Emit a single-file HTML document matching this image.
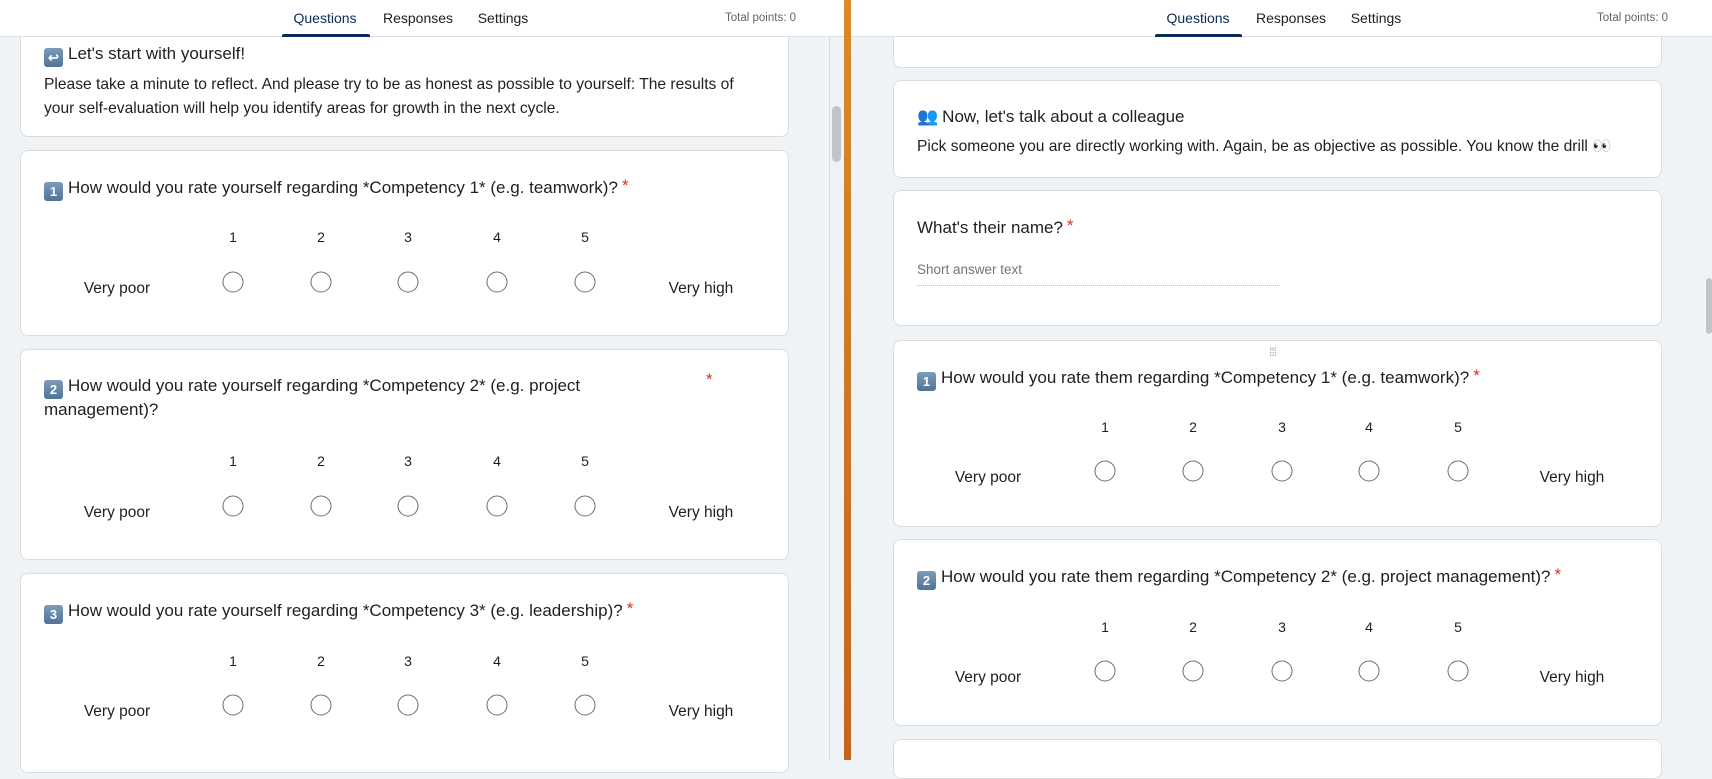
<!DOCTYPE html>
<html><head><meta charset="utf-8"><style>
*{margin:0;padding:0;box-sizing:border-box}
body{width:1712px;height:760px;overflow:hidden;background:#f0f3f6;font-family:"Liberation Sans",sans-serif;color:#1f1f1f;position:relative}
.abs{position:absolute}
.hdr{position:absolute;top:0;height:37px;background:#fff;border-bottom:1px solid #dde1e5;z-index:5}
.tab{position:absolute;top:10px;font-size:14px;color:#202124;transform:translateX(-50%);white-space:nowrap;z-index:6}
.tab.on{color:#0b2a55}
.ul{position:absolute;top:34px;height:3px;background:#0b2a55;border-radius:2px 2px 0 0;z-index:6}
.tp{position:absolute;top:12px;font-size:11.5px;color:#5f6368;white-space:nowrap;z-index:6}
.card{position:absolute;background:#fff;border:1px solid #dadce0;border-radius:8px}
.t{position:absolute;font-size:17px;white-space:nowrap;line-height:24px}
.b{position:absolute;font-size:15.6px;line-height:24px;white-space:nowrap}
.star{color:#d93025;margin-left:4px;font-size:17px;vertical-align:2px}
.key{display:inline-block;width:19px;height:19px;border-radius:3px;background:linear-gradient(#7d9bbb,#4f7397);color:#fff;font-size:13px;font-weight:bold;text-align:center;line-height:19px;margin-right:5px;vertical-align:-3px}
.n{position:absolute;font-size:14px;transform:translateX(-50%)}
.r{position:absolute;width:21px;height:21px;border:1.5px solid #6b6f74;border-radius:50%;transform:translate(-50%,-50%)}
.lb{position:absolute;font-size:15.5px;transform:translate(-50%,-50%);white-space:nowrap}
</style></head><body>
<!-- left panel -->
<div class="hdr" style="left:0;width:844px"></div>
<div class="tab on" style="left:325px">Questions</div>
<div class="tab" style="left:418px">Responses</div>
<div class="tab" style="left:503px">Settings</div>
<div class="ul" style="left:282px;width:88px"></div>
<div class="tp" style="right:916px">Total points: 0</div>

<div class="card" style="left:20px;top:20px;width:769px;height:117px;border-top:none;border-radius:0 0 8px 8px"></div>
<div class="t" style="left:44px;top:42px"><span class="key">↩</span>Let's start with yourself!</div>
<div class="b" style="left:44px;top:73px">Please take a minute to reflect. And please try to be as honest as possible to yourself: The results of</div>
<div class="b" style="left:44px;top:97px">your self-evaluation will help you identify areas for growth in the next cycle.</div>

<div class="card" style="left:20px;top:150px;width:769px;height:186px"></div>
<div class="t" style="left:44px;top:174px"><span class="key">1</span>How would you rate yourself regarding *Competency 1* (e.g. teamwork)?<span class="star">*</span></div>

<div class="card" style="left:20px;top:349px;width:769px;height:211px"></div>
<div class="t" style="left:44px;top:374px"><span class="key">2</span>How would you rate yourself regarding *Competency 2* (e.g. project</div>
<div class="t" style="left:44px;top:398px">management)?</div>
<div class="abs star" style="left:706px;top:370px;margin:0">*</div>

<div class="card" style="left:20px;top:573px;width:769px;height:200px"></div>
<div class="t" style="left:44px;top:597px"><span class="key">3</span>How would you rate yourself regarding *Competency 3* (e.g. leadership)?<span class="star">*</span></div>

<!-- left scrollbar -->
<div class="abs" style="left:829px;top:37px;width:1px;height:723px;background:#dadce0"></div>
<div class="abs" style="left:832px;top:106px;width:9px;height:56px;background:#c2c4c7;border-radius:5px"></div>
<!-- divider -->
<div class="abs" style="left:844px;top:0;width:7px;height:760px;background:linear-gradient(#d98a2a,#c4651f);z-index:7"></div>

<!-- right panel -->
<div class="hdr" style="left:851px;width:861px"></div>
<div class="tab on" style="left:1198px">Questions</div>
<div class="tab" style="left:1291px">Responses</div>
<div class="tab" style="left:1376px">Settings</div>
<div class="ul" style="left:1155px;width:87px"></div>
<div class="tp" style="right:44px">Total points: 0</div>

<div class="card" style="left:893px;top:20px;width:769px;height:48px;border-top:none;border-radius:0 0 8px 8px"></div>
<div class="card" style="left:893px;top:80px;width:769px;height:98px"></div>
<div class="t" style="left:917px;top:105px"><span style="color:#4f7397;margin-right:4px">👥</span>Now, let's talk about a colleague</div>
<div class="b" style="left:917px;top:135px">Pick someone you are directly working with. Again, be as objective as possible. You know the drill 👀</div>

<div class="card" style="left:893px;top:190px;width:769px;height:136px"></div>
<div class="t" style="left:917px;top:214px">What's their name?<span class="star">*</span></div>
<div class="abs" style="left:917px;top:262px;font-size:13.5px;color:#70757a">Short answer text</div>
<div class="abs" style="left:917px;top:285px;width:363px;border-top:1px dotted #bdc1c6"></div>

<div class="card" style="left:893px;top:340px;width:769px;height:187px"></div>
<div class="abs" style="left:1269px;top:345px;font-size:12px;color:#9aa0a6;letter-spacing:-1px">⁞⁞⁞</div>
<div class="t" style="left:917px;top:364px"><span class="key">1</span>How would you rate them regarding *Competency 1* (e.g. teamwork)?<span class="star">*</span></div>

<div class="card" style="left:893px;top:539px;width:769px;height:187px"></div>
<div class="t" style="left:917px;top:563px"><span class="key">2</span>How would you rate them regarding *Competency 2* (e.g. project management)?<span class="star">*</span></div>

<div class="card" style="left:893px;top:739px;width:769px;height:40px"></div>
<div class="abs" style="left:1706px;top:278px;width:6px;height:56px;background:#c2c4c7;border-radius:3px"></div>

<div id="grids"></div>
<script>
function grid(xs,vp,vh,ny,ry){
 let h='';
 xs.forEach((x,i)=>{h+=`<div class="n" style="left:${x}px;top:${ny-8}px">${i+1}</div><div class="r" style="left:${x}px;top:${ry}px"></div>`});
 h+=`<div class="lb" style="left:${vp}px;top:${ry+7}px">Very poor</div><div class="lb" style="left:${vh}px;top:${ry+7}px">Very high</div>`;
 return h;
}
const L=[233,321,408,497,585],R=[1105,1193,1282,1369,1458];
document.getElementById('grids').innerHTML=
 grid(L,117,701,237,282)+grid(L,117,701,461,506)+grid(L,117,701,661,705)+
 grid(R,988,1572,427,471)+grid(R,988,1572,627,671);
</script>
</body></html>
